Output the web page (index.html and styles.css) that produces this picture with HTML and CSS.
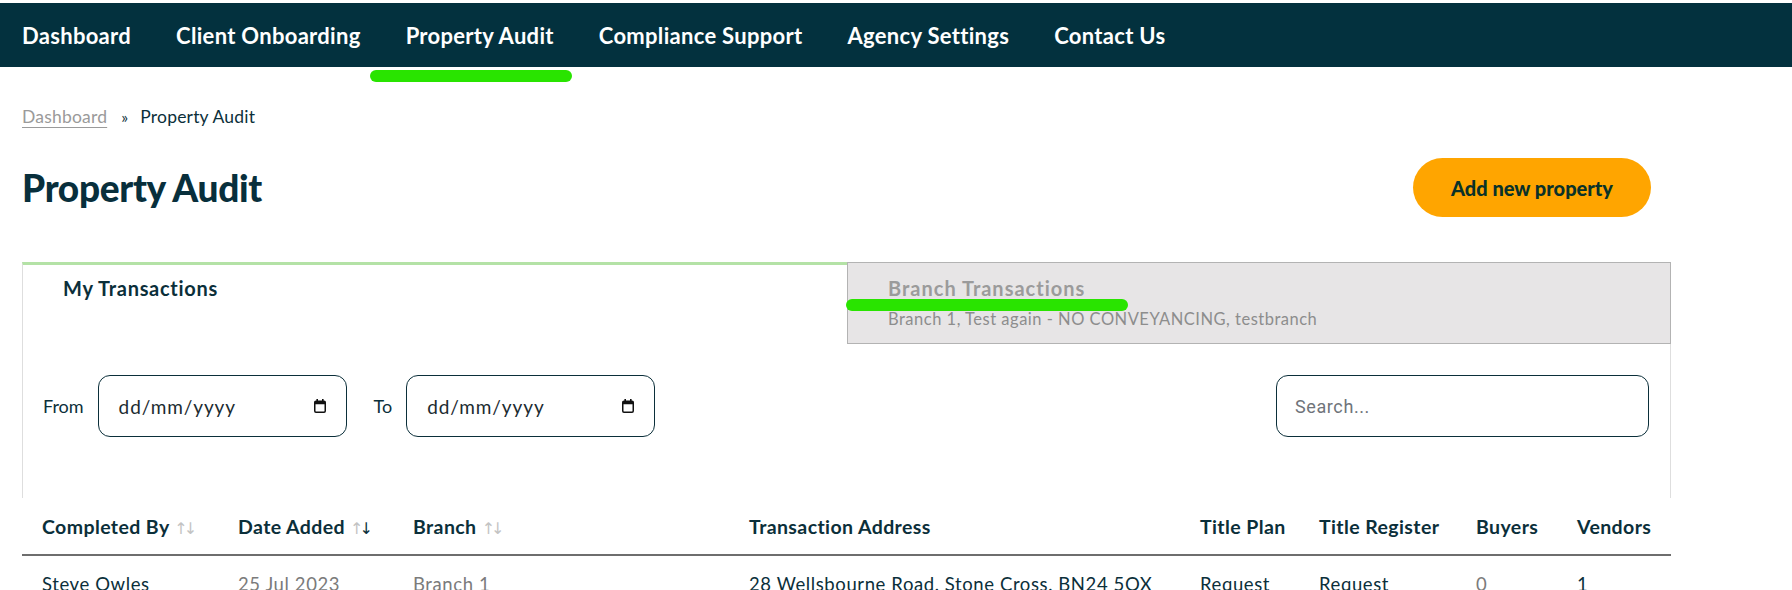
FILE: index.html
```html
<!DOCTYPE html>
<html lang="en">
<head>
<meta charset="utf-8">
<title>Property Audit</title>
<link rel="stylesheet" href="styles.css">
</head>
<body>
<nav class="topnav">
  <a class="nav-item" href="#">Dashboard</a>
  <a class="nav-item" href="#">Client Onboarding</a>
  <a class="nav-item nav-active" href="#">Property Audit<span class="highlight-bar nav-highlight"></span></a>
  <a class="nav-item" href="#">Compliance Support</a>
  <a class="nav-item" href="#">Agency Settings</a>
  <a class="nav-item" href="#">Contact Us</a>
</nav>

<main class="content">
  <div class="breadcrumb">
    <a class="crumb-link" href="#">Dashboard</a>
    <span class="crumb-sep">»</span>
    <span class="crumb-current">Property Audit</span>
  </div>

  <div class="page-header">
    <h1 class="page-title">Property Audit</h1>
    <button class="btn-add">Add new property</button>
  </div>

  <div class="tabs">
    <div class="tab tab-active">
      <div class="tab-title">My Transactions</div>
    </div>
    <div class="tab tab-inactive">
      <div class="tab-title">Branch Transactions</div>
      <div class="tab-sub">Branch 1, Test again - NO CONVEYANCING, testbranch</div>
      <span class="highlight-bar tab-highlight"></span>
    </div>
  </div>

  <div class="panel">
    <div class="filters">
      <div class="date-group">
        <span class="date-label">From</span>
        <div class="date-field">
          <span class="date-text">dd/mm/yyyy</span>
          <svg class="cal-icon" width="14" height="16" viewBox="0 0 14 16"><rect x="1.75" y="3.25" width="10.5" height="11" rx="1.2" fill="none" stroke="#111" stroke-width="1.5"/><rect x="1.75" y="3.25" width="10.5" height="3" fill="#111"/><rect x="3.4" y="1" width="1.6" height="2.5" fill="#111"/><rect x="9" y="1" width="1.6" height="2.5" fill="#111"/></svg>
        </div>
        <span class="date-label date-label-to">To</span>
        <div class="date-field">
          <span class="date-text">dd/mm/yyyy</span>
          <svg class="cal-icon" width="14" height="16" viewBox="0 0 14 16"><rect x="1.75" y="3.25" width="10.5" height="11" rx="1.2" fill="none" stroke="#111" stroke-width="1.5"/><rect x="1.75" y="3.25" width="10.5" height="3" fill="#111"/><rect x="3.4" y="1" width="1.6" height="2.5" fill="#111"/><rect x="9" y="1" width="1.6" height="2.5" fill="#111"/></svg>
        </div>
      </div>
      <div class="search-field"><span class="search-placeholder">Search...</span></div>
    </div>
  </div>

  <table class="tx-table">
    <colgroup>
      <col class="c1"><col class="c2"><col class="c3"><col class="c4"><col class="c5"><col class="c6"><col class="c7"><col class="c8">
    </colgroup>
    <thead>
      <tr>
        <th>Completed By <span class="sort"><span class="arr">↑</span><span class="arr">↓</span></span></th>
        <th>Date Added <span class="sort"><span class="arr">↑</span><span class="arr arr-on">↓</span></span></th>
        <th>Branch <span class="sort"><span class="arr">↑</span><span class="arr">↓</span></span></th>
        <th>Transaction Address</th>
        <th>Title Plan</th>
        <th>Title Register</th>
        <th>Buyers</th>
        <th>Vendors</th>
      </tr>
    </thead>
    <tbody>
      <tr>
        <td>Steve Owles</td>
        <td class="muted">25 Jul 2023</td>
        <td class="muted">Branch 1</td>
        <td>28 Wellsbourne Road, Stone Cross, BN24 5QX</td>
        <td>Request</td>
        <td>Request</td>
        <td class="muted">0</td>
        <td>1</td>
      </tr>
    </tbody>
  </table>
</main>
</body>
</html>
```

FILE: styles.css
```css
* { box-sizing: border-box; }

body {
  margin: 0;
  background: #ffffff;
  font-family: "Lato", "Inter", sans-serif;
  color: #0b2f3a;
  overflow: hidden;
}

.topnav {
  margin-top: 3px;
  height: 64px;
  background: #03313e;
  display: flex;
  align-items: center;
  gap: 45px;
  padding-left: 22px;
}

.nav-item {
  position: relative;
  color: #ffffff;
  text-decoration: none;
  font-size: 22px;
  font-weight: 700;
  letter-spacing: 0.3px;
}

.highlight-bar {
  position: absolute;
  display: block;
  height: 12px;
  border-radius: 6px;
  background: #29e400;
}

.nav-highlight {
  left: -36px;
  width: 202px;
  top: 48px;
}

.content {
  padding: 0 121px 0 22px;
}

.breadcrumb {
  margin-top: 39px;
  height: 22px;
  font-size: 17.5px;
  letter-spacing: 0.2px;
  line-height: 22px;
  display: flex;
  align-items: center;
}

.crumb-link {
  color: #9a9a9a;
  text-decoration: underline;
  text-underline-offset: 4px;
  text-decoration-thickness: 1px;
}

.crumb-sep {
  margin: 0 12px 0 14px;
  font-size: 16px;
}

.crumb-current {
  color: #0b2f3a;
}

.page-header {
  margin-top: 30px;
  display: flex;
  justify-content: space-between;
  align-items: center;
}

.page-title {
  margin: 0;
  font-size: 37px;
  font-weight: 900;
  letter-spacing: -0.3px;
  color: #082f3c;
}

.btn-add {
  width: 238px;
  height: 59px;
  margin-right: 20px;
  border: none;
  border-radius: 30px;
  background: #ffa500;
  color: #0a3229;
  font-family: "Lato", sans-serif;
  font-size: 20px;
  font-weight: 900;
}

.tabs {
  margin-top: 45px;
  display: flex;
  height: 82px;
}

.tab {
  position: relative;
  flex: 0 0 auto;
}

.tab-active {
  width: 825px;
  border-top: 3px solid #b4e2a6;
  border-left: 1px solid #dedede;
  padding: 10px 0 0 40px;
  background: #ffffff;
}

.tab-inactive {
  flex: 1;
  background: #e7e5e6;
  border: 1px solid #b3b3b3;
  padding: 12px 0 0 40px;
}

.tab-title {
  font-size: 20px;
  font-weight: 700;
  letter-spacing: 0.7px;
  line-height: 26px;
  color: #0b2f3a;
}

.tab-inactive .tab-title {
  color: #9b9b9b;
  letter-spacing: 1px;
}

.tab-sub {
  margin-top: 8px;
  font-size: 16.5px;
  letter-spacing: 0.5px;
  color: #8d8d8d;
  line-height: 20px;
}

.tab-highlight {
  left: -2px;
  width: 282px;
  top: 36px;
}

.panel {
  border-left: 1px solid #dedede;
  border-right: 1px solid #dedede;
  height: 154px;
  padding: 31px 21px 0 20px;
}

.filters {
  display: flex;
  justify-content: space-between;
  align-items: center;
}

.date-group {
  display: flex;
  align-items: center;
}

.date-label {
  font-size: 18px;
  margin-right: 14px;
}

.date-label-to {
  margin-left: 27px;
  margin-right: 14px;
}

.date-field {
  width: 249px;
  height: 62px;
  border: 1px solid #0b2f3a;
  border-radius: 12px;
  display: flex;
  align-items: center;
  justify-content: space-between;
  padding: 0 19px 0 20px;
}

.date-text {
  font-size: 19px;
  letter-spacing: 0.9px;
  color: #1b2b30;
}

.search-field {
  width: 373px;
  height: 62px;
  border: 1px solid #0b2f3a;
  border-radius: 12px;
  display: flex;
  align-items: center;
  padding-left: 18px;
}

.search-placeholder {
  font-family: "Roboto", sans-serif;
  font-size: 18px;
  letter-spacing: 0.6px;
  color: #6f747a;
}

.tx-table {
  width: 1649px;
  border-collapse: collapse;
  table-layout: fixed;
}

.c1 { width: 196px; }
.c2 { width: 175px; }
.c3 { width: 336px; }
.c4 { width: 451px; }
.c5 { width: 119px; }
.c6 { width: 157px; }
.c7 { width: 101px; }
.c8 { width: 114px; }

.tx-table th {
  text-align: left;
  font-size: 19.5px;
  font-weight: 700;
  letter-spacing: 0.4px;
  padding: 17px 0 16px 20px;
  height: 57px;
  border-bottom: 2px solid #6e6e6e;
  white-space: nowrap;
}

.sort {
  font-family: "DejaVu Sans", sans-serif;
  font-weight: 400;
  font-size: 16px;
  letter-spacing: -4px;
  color: #c3c3c3;
}

.arr-on {
  color: #0b2f3a;
}

.tx-table td {
  font-size: 18.5px;
  letter-spacing: 0.6px;
  padding: 17px 0 10px 20px;
  white-space: nowrap;
}

.muted {
  color: #7b7b7b;
}
```
